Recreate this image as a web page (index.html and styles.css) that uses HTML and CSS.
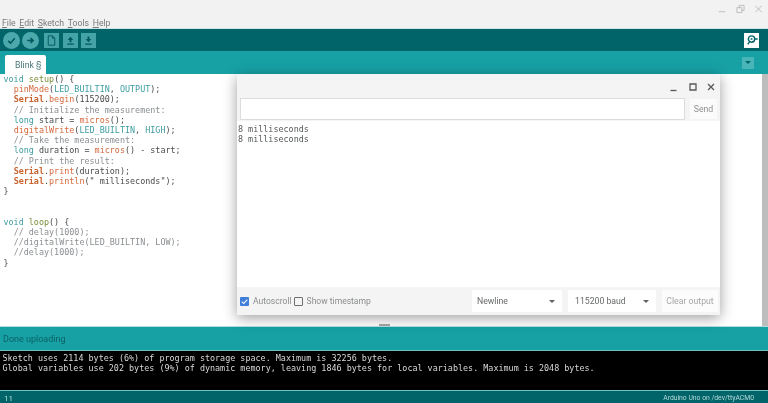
FILE: index.html
```html
<!DOCTYPE html>
<html lang="en">
<head>
<meta charset="utf-8">
<title>Blink | Arduino</title>
<link rel="stylesheet" href="styles.css">
</head>
<body>
<div class="app">
  <header class="titlebar">
    <nav class="menu">
      <span><u>F</u>ile</span><span><u>E</u>dit</span><span><u>S</u>ketch</span><span><u>T</u>ools</span><span><u>H</u>elp</span>
    </nav>
    <div class="wincontrols">
      <svg viewBox="0 0 10 10" class="wc"><path d="M1 8h7" /></svg>
      <svg viewBox="0 0 10 10" class="wc"><path d="M1 3.500h5.500v5.500h-5.500zM3.500 3.500v-2.500h5.500v5.500h-2.500" /></svg>
      <svg viewBox="0 0 10 10" class="wc"><path d="M1.500 1.500l7 7M8.500 1.500l-7 7" /></svg>
    </div>
  </header>

  <section class="toolbar">
    <button class="round"><svg viewBox="0 0 16 16"><path d="M4 8.500l2.800 2.800 5.200-6" /></svg></button>
    <button class="round"><svg viewBox="0 0 16 16"><path d="M4 8h7.500M8 5l3.200 3-3.200 3" /></svg></button>
    <button class="square first"><svg viewBox="0 0 14 14"><path class="thin" d="M3.500 2h4.500l2.500 2.500v7.500h-7zM8 2v2.500h2.500" /></svg></button>
    <button class="square"><svg viewBox="0 0 14 14"><path class="solid" d="M7 3l3 3.500h-2v2.300h-2v-2.300h-2zM3.500 10.300h7v1.200h-7z" /></svg></button>
    <button class="square"><svg viewBox="0 0 14 14"><path class="solid" d="M6 2.800h2v2.500h2l-3 3.500-3-3.500h2zM3.500 10.300h7v1.200h-7z" /></svg></button>
    <button class="serial"><svg viewBox="0 0 15 15"><circle cx="7" cy="6.500" r="3.400" /><path d="M4.800 9.500l-1.800 2.800M6 6.500h2M10.500 6.500h3" /></svg></button>
  </section>

  <section class="tabs">
    <div class="tab">Blink §</div>
    <button class="tabmenu"><span class="caret"></span></button>
  </section>

  <main class="editor">
<pre class="code"><span class="kw">void</span> <span class="fn">setup</span>() {
  <span class="call">pinMode</span>(<span class="kw">LED_BUILTIN</span>, <span class="kw">OUTPUT</span>);
  <b class="ser">Serial</b>.<span class="call">begin</span>(115200);
  <span class="cm">// Initialize the measurement:</span>
  <span class="kw">long</span> start = <span class="call">micros</span>();
  <span class="call">digitalWrite</span>(<span class="kw">LED_BUILTIN</span>, <span class="kw">HIGH</span>);
  <span class="cm">// Take the measurement:</span>
  <span class="kw">long</span> duration = <span class="call">micros</span>() - start;
  <span class="cm">// Print the result:</span>
  <b class="ser">Serial</b>.<span class="call">print</span>(duration);
  <b class="ser">Serial</b>.<span class="call">println</span>(" milliseconds");
}


<span class="kw">void</span> <span class="fn">loop</span>() {
  <span class="cm">// delay(1000);</span>
  <span class="cm">//digitalWrite(LED_BUILTIN, LOW);</span>
  <span class="cm">//delay(1000);</span>
}</pre>
    <div class="scrollbar"></div>
    <div class="splitter"></div>

    <div class="monitor">
      <div class="mon-title">
        <svg viewBox="0 0 10 10" class="mc"><path d="M1.500 8.500h6" /></svg>
        <svg viewBox="0 0 10 10" class="mc"><path d="M2 2h6v6h-6z" /></svg>
        <svg viewBox="0 0 10 10" class="mc"><path d="M2 2l6 6M8 2l-6 6" /></svg>
      </div>
      <div class="mon-input">
        <div class="field"></div>
        <div class="send">Send</div>
      </div>
      <pre class="mon-output">8 milliseconds
8 milliseconds</pre>
      <div class="mon-footer">
        <span class="check on"><svg viewBox="0 0 10 10"><path d="M2 5.200l2.100 2.100 4-4.500" /></svg></span>
        <span class="label">Autoscroll</span>
        <span class="check"></span>
        <span class="label">Show timestamp</span>
        <div class="select newline">Newline<span class="caret dark"></span></div>
        <div class="select baud">115200 baud<span class="caret dark"></span></div>
        <div class="clear">Clear output</div>
      </div>
    </div>
  </main>

  <div class="status">Done uploading</div>
  <pre class="console">Sketch uses 2114 bytes (6%) of program storage space. Maximum is 32256 bytes.
Global variables use 202 bytes (9%) of dynamic memory, leaving 1846 bytes for local variables. Maximum is 2048 bytes.</pre>
  <footer class="footer"><span>11</span><span class="board">Arduino Uno on /dev/ttyACM0</span></footer>
</div>
</body>
</html>
```

FILE: styles.css
```css
* { box-sizing: border-box; }
html, body { margin: 0; padding: 0; }
body { width: 768px; height: 403px; overflow: hidden; font-family: Roboto, "Liberation Sans", sans-serif; background: #fff; }
button { border: 0; padding: 0; margin: 0; }
pre { margin: 0; }

.app { display: flex; flex-direction: column; height: 403px; filter: blur(0.4px); }

.titlebar { height: 28px; background: #f2f2f2; display: flex; justify-content: space-between; flex: none; }
.menu { display: flex; gap: 3.700px; padding: 17px 0 0 2px; font-size: 8.700px; line-height: 12px; color: #77797c; }
.menu u { text-underline-offset: 1px; }
.wincontrols { display: flex; gap: 1px; padding: 4px 5px 0 0; }
.wc { width: 9px; height: 10px; margin-left: 8px; fill: none; stroke: #b9b9b9; stroke-width: 1; }

.toolbar { height: 23px; flex: none; background: #006468; border-top: 1px solid #cfe6e7; display: flex; align-items: center; padding: 0 9px 0 3px; gap: 2px; }
.round { width: 17px; height: 17px; border-radius: 50%; background: #4ba9ac; display: flex; align-items: center; justify-content: center; }
.round svg { width: 13px; height: 13px; fill: none; stroke: #00595d; stroke-width: 2; }
.square { width: 15px; height: 15px; background: #43a3a6; margin-left: 1.500px; display: flex; align-items: center; justify-content: center; }
.square.first { margin-left: 3px; }
.square svg { width: 13px; height: 13px; }
.thin { fill: none; stroke: #00595d; stroke-width: 1; }
.solid { fill: #00595d; }
.serial { width: 15px; height: 15px; background: #fff; margin-left: auto; display: flex; align-items: center; justify-content: center; }
.serial svg { width: 14px; height: 14px; fill: none; stroke: #006468; stroke-width: 1.500; }

.tabs { height: 23px; flex: none; background: #17a1a5; display: flex; align-items: flex-end; justify-content: space-between; padding: 0 14px 0 5px; }
.tab { width: 41px; height: 19px; background: #fff; border-radius: 2px 2px 0 0; font-size: 8.700px; line-height: 20px; color: #48777a; padding-left: 10px; }
.tabmenu { width: 12px; height: 12px; background: #48b5b8; align-self: center; display: flex; align-items: center; justify-content: center; }
.caret { display: block; width: 0; height: 0; border-left: 3px solid transparent; border-right: 3px solid transparent; border-top: 3.500px solid #006468; }
.caret.dark { border-top-color: #5d5f61; }

.editor { flex: 1; position: relative; background: #fff; min-height: 0; }
.code { font: 8.420px/10.200px "DejaVu Sans Mono", monospace; padding: 0 0 0 3.500px; color: #4a4c4e; }
.code .kw { color: #3d9ca0; }
.code .fn { color: #7a8f3a; }
.code .call { color: #d4683c; }
.code .ser { color: #c9622e; }
.code .cm { color: #8b8f92; }
.scrollbar { position: absolute; right: 0; top: 0; width: 6px; height: 100%; background: #bdbdbd; }
.splitter { position: absolute; left: 379px; bottom: 0; width: 11px; height: 2px; background: #a8a8a8; }

.monitor { position: absolute; left: 237px; top: 0; width: 483px; height: 241px; background: #f4f4f4; box-shadow: 0 3px 13px rgba(0,0,0,.38); display: flex; flex-direction: column; }
.mon-title { height: 23px; flex: none; display: flex; justify-content: flex-end; align-items: center; gap: 8.500px; padding: 2px 4px 0 0; }
.mc { width: 10px; height: 10px; fill: none; stroke: #55585a; stroke-width: 1.300; }
.mon-input { height: 24px; flex: none; display: flex; padding: 1px 3px 0 3px; gap: 5px; }
.field { width: 445px; height: 22px; background: #fff; border: 1px solid #dcdcdc; }
.send { width: 27px; height: 20px; margin-top: 1px; background: #fbfbfb; font-size: 8.700px; line-height: 20px; text-align: center; color: #8e9092; }
.mon-output { flex: 1; background: #fff; font: 8.420px/10.100px "DejaVu Sans Mono", monospace; color: #55585a; padding: 3px 0 0 1px; }
.mon-footer { height: 28px; flex: none; display: flex; align-items: center; padding: 0 2px 0 3px; font-size: 8.700px; color: #8a8c8e; }
.check { width: 9px; height: 9px; border: 1.300px solid #6c6e70; border-radius: 1px; flex: none; margin-right: 4px; }
.check.on { background: #3f7fd9; border: 0; }
.check svg { display: block; width: 9px; height: 9px; fill: none; stroke: #fff; stroke-width: 1.200; }
.label { margin-right: 2px; font-size: 8.550px; }
.select { height: 22px; background: #fff; display: flex; align-items: center; justify-content: space-between; color: #66686a; padding: 0 7px 0 5px; flex: none; }
.newline { width: 90px; margin-left: auto; }
.baud { width: 88px; margin-left: 6px; padding-left: 7px; }
.clear { width: 56px; height: 22px; line-height: 22px; background: #fcfcfc; margin-left: 6px; text-align: center; color: #a4a6a8; flex: none; }

.status { height: 24px; flex: none; background: #17a1a5; border-top: 1px solid #b4dcdd; font-size: 9px; line-height: 25px; color: #0b6266; padding-left: 3px; }
.console { height: 41px; flex: none; background: #000; border-top: 1px solid #6fbfc1; border-bottom: 1px solid #6fbfc1; color: #d8d8d8; font: 8.420px/10.100px "DejaVu Sans Mono", monospace; padding: 2px 0 0 2.500px; }
.footer { height: 12px; flex: none; background: #006468; display: flex; justify-content: space-between; font-size: 8px; line-height: 15px; color: #b5dadb; padding: 0 14px 0 4px; }
.board { font-size: 6.800px; }
```
